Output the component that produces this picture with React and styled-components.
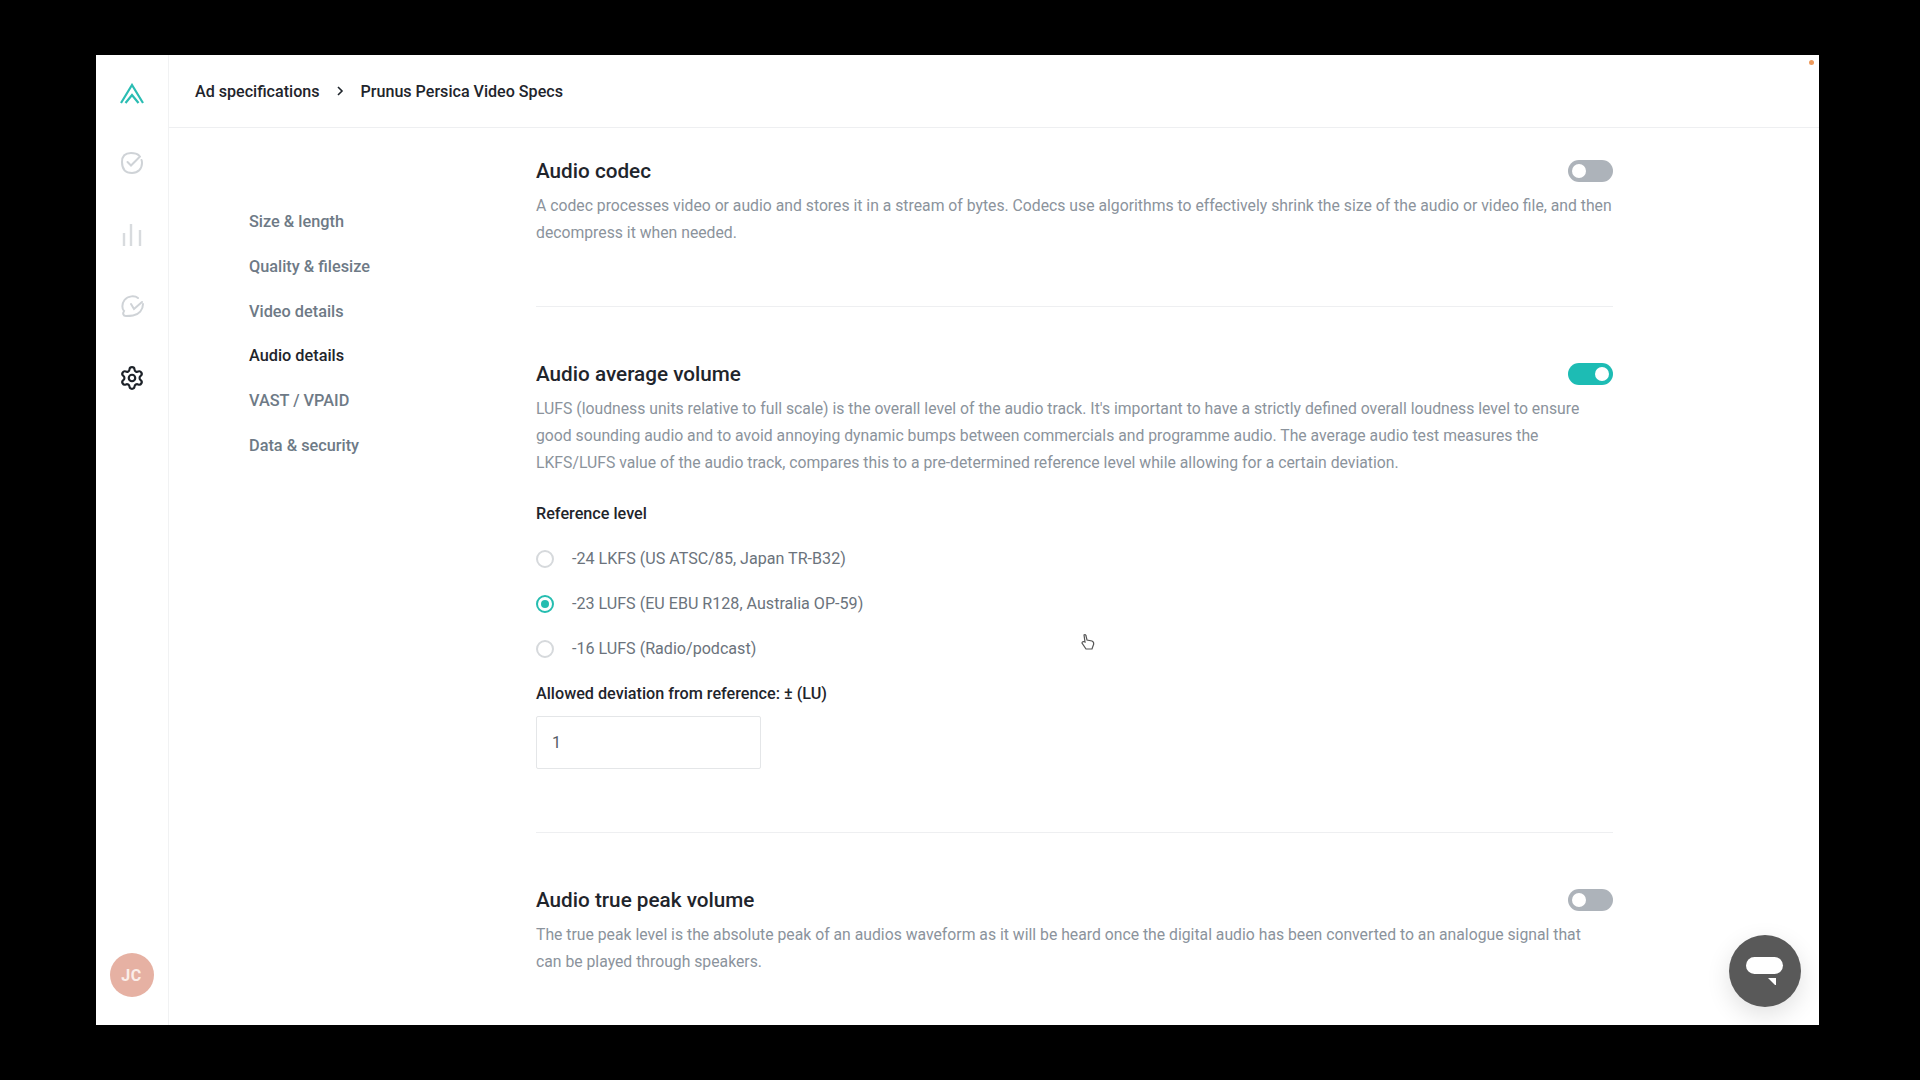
import React from 'react';
import styled, { createGlobalStyle } from 'styled-components';
import { Settings } from 'lucide-react';

const Global = createGlobalStyle`
  html, body { margin: 0; padding: 0; background: #000; }
  body { font-family: "Roboto", "Liberation Sans", sans-serif; }
  * { box-sizing: border-box; }
`;

const Stage = styled.div`
  width: 1920px;
  height: 1080px;
  padding: 55px 101px 55px 96px;
  background: #000;
  overflow: hidden;
`;

const Frame = styled.div`
  position: relative;
  display: flex;
  height: 970px;
  background: #fff;
  overflow: hidden;
`;

const Rail = styled.nav`
  display: flex;
  flex: 0 0 73px;
  flex-direction: column;
  align-items: center;
  padding: 25px 1px 0 0;
  border-right: 1px solid #f1f2f3;
`;

const RailIcon = styled.div`
  display: flex;
  align-items: center;
  justify-content: center;
  width: 28px;
  height: 28px;
  margin-bottom: ${props => props.gap}px;
  color: ${props => props.active ? '#1d2229' : '#cfd3d7'};
`;

const Avatar = styled.div`
  display: flex;
  align-items: center;
  justify-content: center;
  width: 44px;
  height: 44px;
  margin: auto 0 28px;
  border-radius: 50%;
  background: #e6b1a3;
  color: #fbeeea;
  font-size: 16px;
  font-weight: 700;
  letter-spacing: 0.5px;
`;

const Main = styled.div`
  display: flex;
  flex: 1;
  flex-direction: column;
  min-width: 0;
`;

const Header = styled.header`
  display: flex;
  flex: 0 0 73px;
  align-items: center;
  padding: 0 0 0 26px;
  border-bottom: 1px solid #eeeff1;
  color: #1f252c;
  font-size: 16.1px;
  font-weight: 500;
`;

const Chevron = styled.svg`
  width: 8px;
  height: 10px;
  margin: 0 17px 0 16px;
`;

const Body = styled.div`
  display: flex;
  flex: 1;
  min-height: 0;
`;

const SideNav = styled.ul`
  flex: 0 0 367px;
  margin: 0;
  padding: 72px 0 0 80px;
  list-style: none;
`;

const SideItem = styled.li`
  height: 44.8px;
  line-height: 44.8px;
  font-size: 16.3px;
  font-weight: 500;
  color: ${props => props.active ? '#1f252c' : '#6e7a86'};
`;

const Content = styled.main`
  flex: 0 0 1077px;
  padding-top: 28px;
`;

const Section = styled.section`
  padding-top: 1px;
  padding-bottom: ${props => props.pad}px;
  margin-bottom: 52px;
  border-bottom: ${props => props.last ? 'none' : '1px solid #eeeff1'};
`;

const TitleRow = styled.div`
  display: flex;
  align-items: center;
  justify-content: space-between;
  height: 28px;
  margin-bottom: 7px;
`;

const Title = styled.h2`
  margin: 0;
  font-size: 20.7px;
  line-height: 28px;
  font-weight: 500;
  color: #1f252c;
`;

const Toggle = styled.div`
  display: flex;
  align-items: center;
  justify-content: ${props => props.on ? 'flex-end' : 'flex-start'};
  width: 45px;
  height: 22px;
  padding: 0 4px;
  border-radius: 11px;
  background: ${props => props.on ? '#1dbcb4' : '#adb3ba'};

  &::after {
    content: '';
    width: 14px;
    height: 14px;
    border-radius: 50%;
    background: #fff;
  }
`;

const Desc = styled.p`
  margin: 0;
  font-size: 15.75px;
  line-height: 27px;
  color: #8b939c;
`;

const Label = styled.div`
  height: 24px;
  line-height: 24px;
  font-size: 16.2px;
  font-weight: 500;
  color: #1f252c;
  margin-top: ${props => props.top}px;
`;

const RadioList = styled.div`
  display: flex;
  flex-direction: column;
  margin-top: 10px;
`;

const RadioRow = styled.label`
  display: flex;
  align-items: center;
  gap: 18px;
  height: 45px;
  font-size: 16.1px;
  color: #6b737c;
`;

const RadioMark = styled.span`
  display: flex;
  align-items: center;
  justify-content: center;
  width: 18px;
  height: 18px;
  border-radius: 50%;
  border: 2px solid ${props => props.checked ? '#25bdb0' : '#d6d9dc'};

  &::after {
    content: '';
    display: ${props => props.checked ? 'block' : 'none'};
    width: 8px;
    height: 8px;
    border-radius: 50%;
    background: #25bdb0;
  }
`;

const NumberBox = styled.div`
  display: flex;
  align-items: center;
  width: 225px;
  height: 53px;
  margin-top: 10px;
  padding-left: 15px;
  border: 1px solid #e4e6e8;
  border-radius: 2px;
  font-size: 16px;
  color: #555c64;
`;

const Dot = styled.div`
  position: absolute;
  top: 5px;
  right: 5px;
  width: 5px;
  height: 5px;
  border-radius: 50%;
  background: #ee9a5c;
`;

const ChatButton = styled.div`
  position: absolute;
  right: 18px;
  bottom: 18px;
  display: flex;
  align-items: center;
  justify-content: center;
  width: 72px;
  height: 72px;
  border-radius: 50%;
  background: #595959;
  box-shadow: 0 8px 24px rgba(0, 0, 0, 0.12);
`;

const Cursor = styled.svg`
  position: absolute;
  left: 984px;
  top: 578px;
  width: 16px;
  height: 18px;
`;

const railIcons = [
  { gap: 41, el: (
    <svg width="26" height="22" viewBox="0 0 26 22" fill="none" stroke="#2bbdb3" strokeWidth="2.2">
      <path d="M2 20 L13 2 L24 20" />
      <path d="M6.500 20 L13 12 L19.500 20" />
    </svg>
  ) },
  { gap: 44, el: (
    <svg width="24" height="24" viewBox="0 0 24 24" fill="none" stroke="currentColor" strokeWidth="2" strokeLinecap="round">
      <path d="M19 4.500C17 2.500 15 2 11 2C5 2 2 5 2 11C2 18 5 22 12 22C18 22 22 18 22 12C22 11 22 10 21.500 9" />
      <path d="M7.500 11L11 14.500L20 5.500" />
    </svg>
  ) },
  { gap: 43, el: (
    <svg width="22" height="24" viewBox="0 0 22 24" fill="none" stroke="#d8dbde" strokeWidth="2.4">
      <path d="M3 10v13M10 1v22M19 7v16" />
    </svg>
  ) },
  { gap: 44, el: (
    <svg width="24" height="24" viewBox="0 0 24 24" fill="none" stroke="currentColor" strokeWidth="2" strokeLinecap="round">
      <path d="M18 4C15 1.500 8 1.500 4.500 6C1.500 10 2 15 4 17C2.500 19.500 3 22 6 22C8 22 10 22 13 21.500C19 20.500 23 16 23 10" />
      <path d="M11 10L14 15L22 8" />
    </svg>
  ) },
  { active: true, gap: 0, el: <Settings size={26} strokeWidth={2} /> },
];

const navItems = ['Size & length', 'Quality & filesize', 'Video details', 'Audio details', 'VAST / VPAID', 'Data & security'];

const levels = [
  { label: '-24 LKFS (US ATSC/85, Japan TR-B32)' },
  { label: '-23 LUFS (EU EBU R128, Australia OP-59)', checked: true },
  { label: '-16 LUFS (Radio/podcast)' },
];

export default function App() {
  return (
    <Stage>
      <Global />
      <Frame>
        <Rail>
          {railIcons.map((icon, i) => (
            <RailIcon key={i} gap={icon.gap} active={icon.active}>{icon.el}</RailIcon>
          ))}
          <Avatar>JC</Avatar>
        </Rail>
        <Main>
          <Header>
            Ad specifications
            <Chevron viewBox="0 0 8 10" fill="none" stroke="#1f252c" strokeWidth="1.6"><path d="M2 1l4 4-4 4" /></Chevron>
            Prunus Persica Video Specs
          </Header>
          <Body>
            <SideNav>
              {navItems.map(item => (
                <SideItem key={item} active={item === 'Audio details'}>{item}</SideItem>
              ))}
            </SideNav>
            <Content>
              <Section pad={60}>
                <TitleRow>
                  <Title>Audio codec</Title>
                  <Toggle />
                </TitleRow>
                <Desc>A codec processes video or audio and stores it in a stream of bytes. Codecs use algorithms to effectively shrink the size of the audio or video file, and then decompress it when needed.</Desc>
              </Section>
              <Section pad={63}>
                <TitleRow>
                  <Title>Audio average volume</Title>
                  <Toggle on />
                </TitleRow>
                <Desc>LUFS (loudness units relative to full scale) is the overall level of the audio track. It's important to have a strictly defined overall loudness level to ensure good sounding audio and to avoid annoying dynamic bumps between commercials and programme audio. The average audio test measures the LKFS/LUFS value of the audio track, compares this to a pre-determined reference level while allowing for a certain deviation.</Desc>
                <Label top={26}>Reference level</Label>
                <RadioList>
                  {levels.map(level => (
                    <RadioRow key={level.label}>
                      <RadioMark checked={level.checked} />
                      {level.label}
                    </RadioRow>
                  ))}
                </RadioList>
                <Label top={11}>Allowed deviation from reference: ± (LU)</Label>
                <NumberBox>1</NumberBox>
              </Section>
              <Section last>
                <TitleRow>
                  <Title>Audio true peak volume</Title>
                  <Toggle />
                </TitleRow>
                <Desc>The true peak level is the absolute peak of an audios waveform as it will be heard once the digital audio has been converted to an analogue signal that<br />can be played through speakers.</Desc>
              </Section>
            </Content>
          </Body>
        </Main>
        <Dot />
        <Cursor viewBox="0 0 16 18" fill="#fff" stroke="#555" strokeWidth="1.2">
          <path d="M4 2c1-1 2 0 2 1l1 4 5 1c2 1 2 3 1 5l-1 3H6L2 10c0-1 1-2 3-1L4 2z" />
        </Cursor>
        <ChatButton>
          <svg width="38" height="28" viewBox="0 0 38 28" fill="#fff">
            <rect x="0" y="0" width="37" height="17" rx="8.500" />
            <path d="M22 21h8v8z" />
          </svg>
        </ChatButton>
      </Frame>
    </Stage>
  );
}
